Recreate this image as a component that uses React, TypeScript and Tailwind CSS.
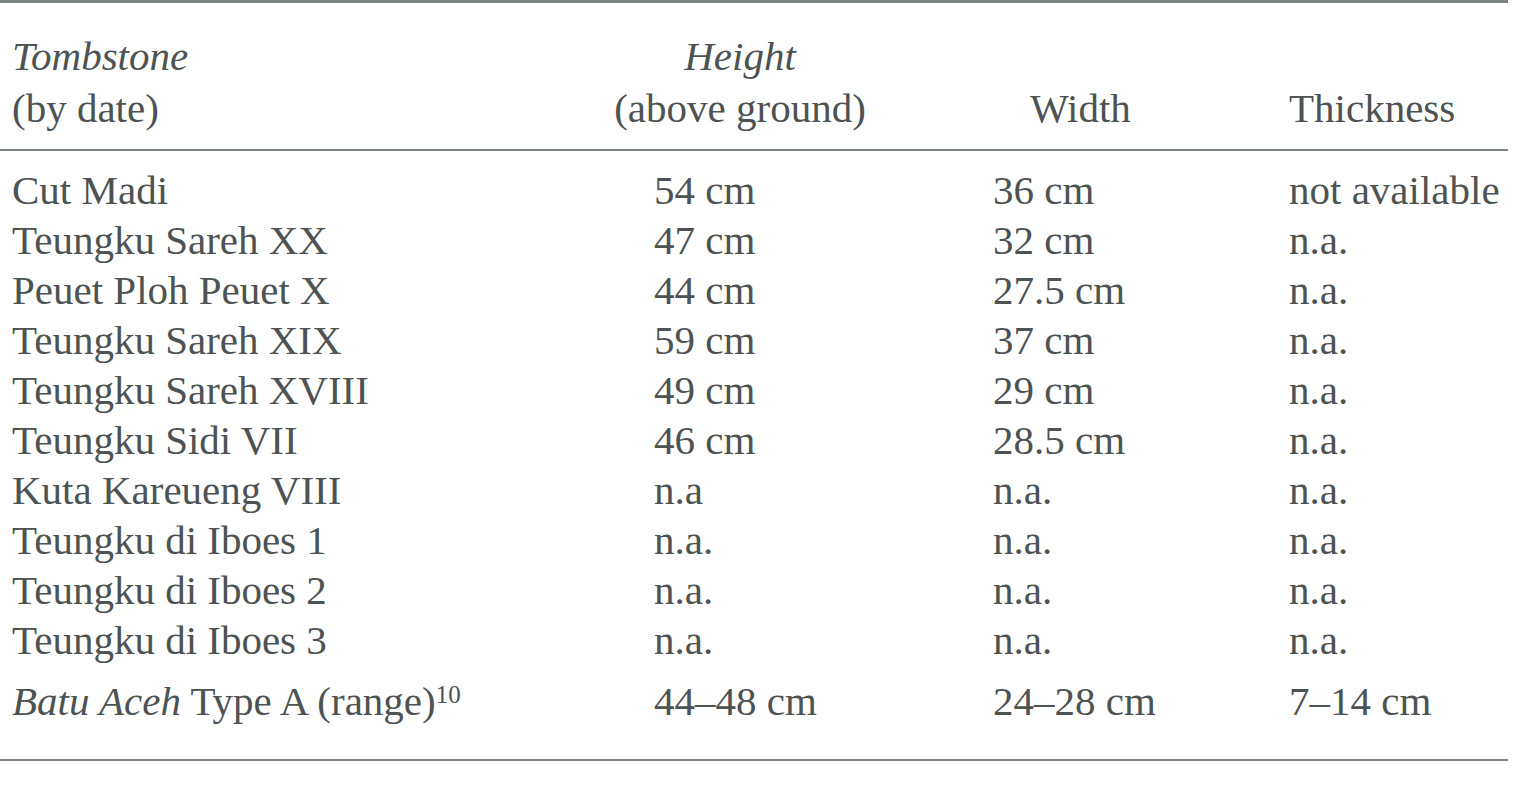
import React from "react";

const rows: [React.ReactNode, string, string, string][] = [
  ["Cut Madi", "54 cm", "36 cm", "not available"],
  ["Teungku Sareh XX", "47 cm", "32 cm", "n.a."],
  ["Peuet Ploh Peuet X", "44 cm", "27.5 cm", "n.a."],
  ["Teungku Sareh XIX", "59 cm", "37 cm", "n.a."],
  ["Teungku Sareh XVIII", "49 cm", "29 cm", "n.a."],
  ["Teungku Sidi VII", "46 cm", "28.5 cm", "n.a."],
  ["Kuta Kareueng VIII", "n.a", "n.a.", "n.a."],
  ["Teungku di Iboes 1", "n.a.", "n.a.", "n.a."],
  ["Teungku di Iboes 2", "n.a.", "n.a.", "n.a."],
  ["Teungku di Iboes 3", "n.a.", "n.a.", "n.a."],
];

function Row({ cells, className = "" }: { cells: [React.ReactNode, string, string, string]; className?: string }) {
  return (
    <div className={`grid grid-cols-[642px_339px_296px_1fr] pl-[12px] h-[50px] leading-[50px] whitespace-nowrap ${className}`}>
      <div>{cells[0]}</div>
      <div>{cells[1]}</div>
      <div>{cells[2]}</div>
      <div>{cells[3]}</div>
    </div>
  );
}

export default function App() {
  return (
    <div
      className="w-[1516px] h-[810px] bg-white overflow-hidden text-[#4d5252] text-[41px]"
      style={{ fontFamily: '"Liberation Serif", "Times New Roman", serif' }}
    >
      <div className="w-[1508px] h-[3px] bg-[#7d8282]" />

      <div className="flex pl-[12px] pt-[27px] leading-[52px] whitespace-nowrap">
        <div className="w-[600px]">
          <div className="italic">Tombstone</div>
          <div>(by date)</div>
        </div>
        <div className="w-[256px] text-center">
          <div className="italic">Height</div>
          <div>(above ground)</div>
        </div>
        <div className="w-[162px]" />
        <div className="w-[259px]">
          <div>&nbsp;</div>
          <div>Width</div>
        </div>
        <div>
          <div>&nbsp;</div>
          <div>Thickness</div>
        </div>
      </div>

      <div className="mt-[15px] w-[1508px] h-[2px] bg-[#7d8282]" />

      <div className="pt-[14px]">
        {rows.map((r, i) => (
          <Row key={i} cells={r} />
        ))}
        <Row
          className="mt-[11px]"
          cells={[
            <span>
              <span className="italic">Batu Aceh</span> Type A (range)
              <sup className="text-[25px]">10</sup>
            </span>,
            "44–48 cm",
            "24–28 cm",
            "7–14 cm",
          ]}
        />
      </div>

      <div className="mt-[33px] w-[1508px] h-[2px] bg-[#7d8282]" />
    </div>
  );
}
